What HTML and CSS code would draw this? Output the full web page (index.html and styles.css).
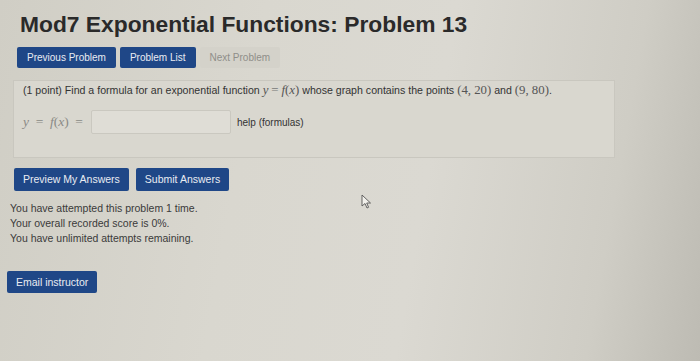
FILE: index.html
```html
<!DOCTYPE html>
<html>
<head>
<meta charset="utf-8">
<link rel="stylesheet" href="styles.css">
</head>
<body>
<div class="page">
  <h1 class="title">Mod7 Exponential Functions: Problem 13</h1>
  <div class="nav">
    <span class="btn">Previous Problem</span>
    <span class="btn">Problem List</span>
    <span class="btn disabled">Next Problem</span>
  </div>
  <div class="problem">
    <p class="statement">(1 point) Find a formula for an exponential function <span class="m">y</span> <span class="op">=</span> <span class="m">f</span><span class="r">(</span><span class="m">x</span><span class="r">)</span> whose graph contains the points <span class="r">(4, 20)</span> and <span class="r">(9, 80)</span>.</p>
    <div class="answer">
      <span class="lhs"><span class="m">y</span> <span class="op">=</span> <span class="m">f</span><span class="r">(</span><span class="m">x</span><span class="r">)</span> <span class="op">=</span></span>
      <span class="input"></span>
      <span class="help">help (formulas)</span>
    </div>
  </div>
  <div class="actions">
    <span class="btn big">Preview My Answers</span>
    <span class="btn big">Submit Answers</span>
  </div>
  <div class="status">
    <div>You have attempted this problem 1 time.</div>
    <div>Your overall recorded score is 0%.</div>
    <div>You have unlimited attempts remaining.</div>
  </div>
  <div class="email">
    <span class="btn big">Email instructor</span>
  </div>
  <svg class="cursor" width="12" height="16" viewBox="0 0 12 16"><path d="M1 1 L1 12 L4 9.5 L6 14 L7.6 13.3 L5.7 9 L9.5 9 Z" fill="#f2f1ec" stroke="#555" stroke-width="0.9"/></svg>
</div>
</body>
</html>
```
FILE: styles.css
```css
html, body {
  margin: 0;
  padding: 0;
}
body {
  width: 700px;
  height: 361px;
  overflow: hidden;
  font-family: "Liberation Sans", Arial, sans-serif;
  background: linear-gradient(100deg, #d0cec5 0%, #d9d7cf 35%, #dbd9d2 60%, #cfcdc5 85%, #bdbbb3 100%);
  color: #2d2d2d;
}
.page {
  position: relative;
  height: 361px;
  padding: 0 0 0 12px;
}
.title {
  margin: 0;
  padding: 11px 0 0 8px;
  font-size: 22.8px;
  line-height: 26px;
  font-weight: bold;
  color: #2a2a2a;
}
.nav {
  display: flex;
  gap: 4px;
  margin: 10px 0 0 5px;
}
.btn {
  display: inline-block;
  background: #1f4787;
  color: #e9ecf2;
  font-size: 10px;
  line-height: 21px;
  height: 21px;
  padding: 0 10px;
  border-radius: 2px;
}
.btn.disabled {
  background: #d4d2ca;
  color: #8f8e89;
}
.problem {
  margin: 12px 0 0 1px;
  width: 602px;
  height: 78px;
  background: #d9d7cf;
  border: 1px solid #c9c7bf;
  box-sizing: border-box;
  padding: 0 0 0 9px;
}
.statement {
  margin: 2px 0 0 0;
  font-size: 10.6px;
  line-height: 14px;
  color: #333;
}
.m {
  font-family: "Liberation Serif", "Times New Roman", serif;
  font-style: italic;
  font-size: 12.8px;
  color: #555;
}
.r {
  font-family: "Liberation Serif", "Times New Roman", serif;
  font-size: 12.8px;
  color: #555;
}
.op {
  font-family: "Liberation Serif", serif;
  font-size: 12.8px;
  color: #777;
}
.answer {
  display: flex;
  align-items: center;
  margin-top: 13px;
}
.lhs {
  width: 68px;
  font-size: 13px;
  color: #888;
  word-spacing: 3px;
}
.lhs .m, .lhs .r, .lhs .op { color: #8a8a86; font-size: 13.5px; }
.input {
  display: inline-block;
  width: 138px;
  height: 22px;
  background: #dfddd6;
  border: 1px solid #cac8c0;
  border-radius: 2px;
}
.help {
  font-size: 10px;
  margin-left: 6px;
  color: #333;
}
.actions {
  display: flex;
  gap: 7px;
  margin: 10px 0 0 2px;
}
.btn.big {
  font-size: 10.5px;
  height: 23px;
  line-height: 23px;
  padding: 0 9px;
}
.status {
  margin: 10px 0 0 -2px;
  font-size: 10.5px;
  line-height: 15px;
  color: #3a3a3a;
}
.email {
  margin: 25px 0 0 -5px;
}
.email .btn.big {
  height: 22px;
  line-height: 22px;
}
.cursor {
  position: absolute;
  left: 361px;
  top: 194px;
}
```
